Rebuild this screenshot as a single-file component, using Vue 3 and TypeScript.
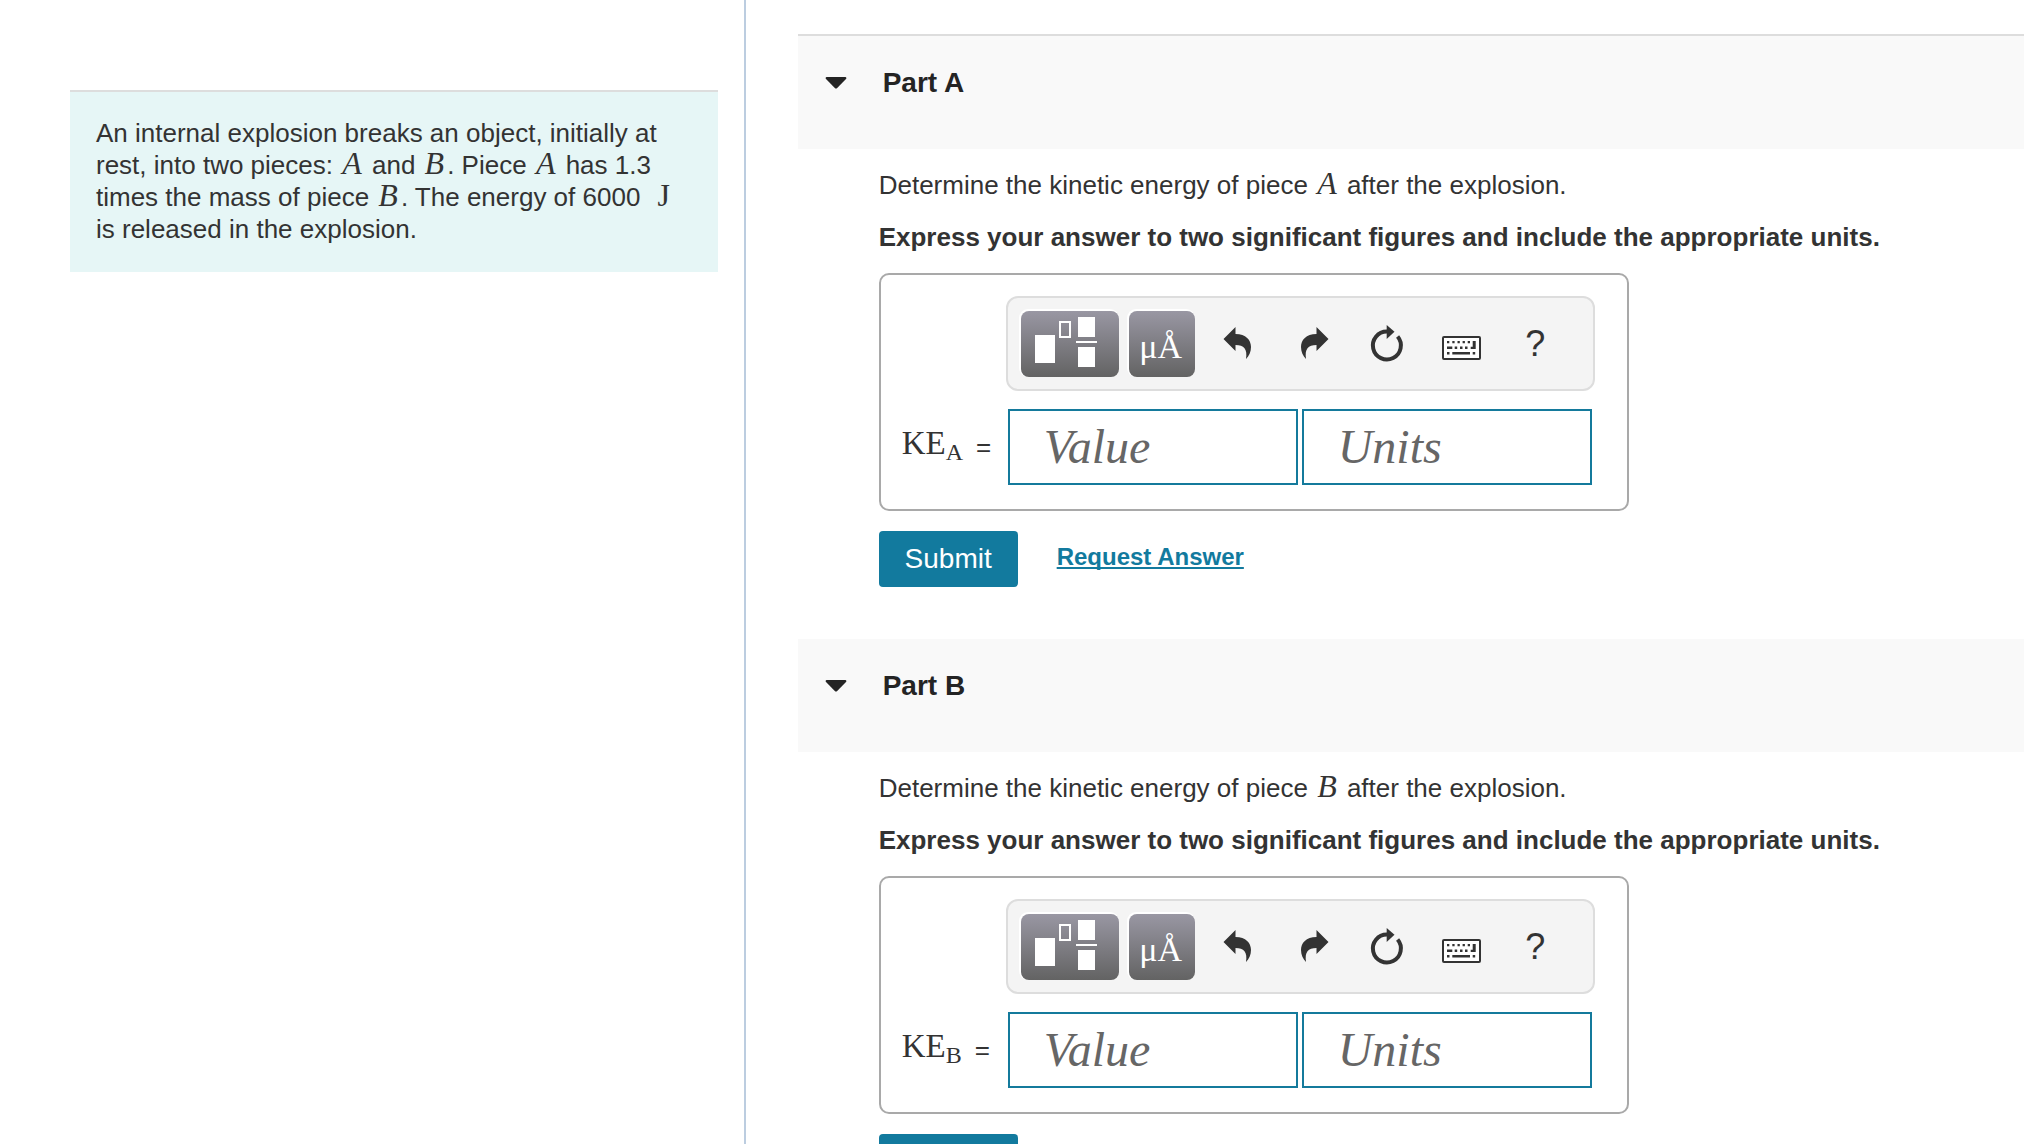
<script setup lang="ts">
import { reactive } from 'vue'

interface Part {
  id: string
  open: boolean
  value: string
  units: string
}

const parts = reactive<Part[]>([
  { id: 'A', open: true, value: '', units: '' },
  { id: 'B', open: true, value: '', units: '' },
])

function clear(part: Part) {
  part.value = ''
  part.units = ''
}
</script>

<template>
  <main class="page">
    <section class="problem">
      <p class="statement">
        An internal explosion breaks an object, initially at rest, into two pieces:
        <i class="math">A</i> and <i class="math">B</i>. Piece <i class="math">A</i> has 1.3 times the mass of piece
        <i class="math">B</i>. The energy of 6000 <span class="math unit">J</span> is released in the explosion.
      </p>
    </section>

    <div class="parts">
      <section v-for="part in parts" :key="part.id" class="part">
        <h2 class="part-head">
          <button type="button" class="toggle" :aria-expanded="part.open" @click="part.open = !part.open">
            <svg class="caret" viewBox="0 0 22 12" aria-hidden="true">
              <path d="M1.500 0H20.500Q22 .6 21 2L12.200 11Q11 12.200 9.800 11L1 2Q0 .6 1.500 0Z" />
            </svg>
            <span>Part {{ part.id }}</span>
          </button>
        </h2>

        <form v-show="part.open" class="part-body" @submit.prevent>
          <p class="text">Determine the kinetic energy of piece <i class="math">{{ part.id }}</i> after the explosion.</p>
          <p class="text strong">Express your answer to two significant figures and include the appropriate units.</p>

          <div class="answer">
            <div class="toolbar" role="toolbar" aria-label="Equation tools">
              <button type="button" class="palette templates" aria-label="Templates">
                <svg viewBox="0 0 98 66" aria-hidden="true">
                  <rect x="14" y="24" width="20" height="28" />
                  <rect class="hollow" x="39" y="11" width="10" height="15" />
                  <rect x="57" y="6" width="17" height="20" />
                  <rect x="55" y="30" width="21" height="2" />
                  <rect x="57" y="36" width="17" height="20" />
                </svg>
              </button>
              <button type="button" class="palette symbols" aria-label="Symbols and units">μÅ</button>
              <button type="button" class="tool first" aria-label="Undo">
                <svg viewBox="0 0 75 66" aria-hidden="true">
                  <path d="M23.500 28L35.500 16V23C46 23 51 29 51 36C51 41 49 45 46 48C47.500 38 44 34 35.500 34V40Z" />
                </svg>
              </button>
              <button type="button" class="tool" aria-label="Redo">
                <svg viewBox="0 0 75 66" aria-hidden="true">
                  <path d="M53.500 28L41.500 16V23C31 23 26 29 26 36C26 41 28 45 31 48C29.500 38 33 34 41.500 34V40Z" />
                </svg>
              </button>
              <button type="button" class="tool" aria-label="Reset" @click="clear(part)">
                <svg viewBox="0 0 75 66" aria-hidden="true">
                  <path class="ring" d="M47.600 25.500A14 14 0 1 1 37 20.500" />
                  <path d="M36.700 14L44.500 20.800L36.700 28Z" />
                </svg>
              </button>
              <button type="button" class="tool" aria-label="Keyboard shortcuts">
                <svg viewBox="-1 0 75 66" aria-hidden="true">
                  <rect class="case" x="17" y="26" width="37" height="22" rx="1" />
                  <path
                    d="M21 30h2.300v2.300h-2.300zM26.300 30h2.300v2.300h-2.300zM31.500 30h2.300v2.300h-2.300zM36.600 30h2.300v2.300h-2.300zM41.700 30h2.300v2.300h-2.300zM46.700 30h3v8h-5v-2.300h2zM21 35.500h5.300v2.500h-5.300zM28.700 35.500h2.500v2.500h-2.500zM34 35.500h2.500v2.500h-2.500zM39 35.500h2.500v2.500h-2.500zM21 41h2.500v2.500h-2.500zM26.300 41h17.700v2.500h-17.700zM46.700 41h2.500v2.500h-2.500z"
                  />
                </svg>
              </button>
              <button type="button" class="tool help" aria-label="Help">?</button>
            </div>

            <label class="quantity" :for="`value-${part.id}`">
              <span class="symbol">KE<sub>{{ part.id }}</sub></span><span class="equals">=</span>
            </label>
            <div class="fields">
              <input :id="`value-${part.id}`" v-model="part.value" type="text" placeholder="Value" />
              <input v-model="part.units" type="text" placeholder="Units" :aria-label="`Units for part ${part.id}`" />
            </div>
          </div>

          <div class="actions">
            <button type="submit" class="submit">Submit</button>
            <a class="request" href="#">Request Answer</a>
          </div>
        </form>
      </section>
    </div>
  </main>
</template>

<style>
body {
  margin: 0;
  background: #fff;
}
</style>

<style scoped>
.page {
  display: grid;
  grid-template-columns: minmax(0, 7fr) minmax(0, 12fr);
  min-height: 100vh;
  color: #333;
  font-family: "Liberation Sans", Arial, sans-serif;
  font-size: 26px;
  line-height: 32px;
}

button,
input {
  box-sizing: border-box;
  margin: 0;
  font-family: inherit;
}

button {
  padding: 0;
  border: 0;
  background: none;
  color: inherit;
  cursor: pointer;
}

.problem {
  padding: 90px 26px 40px 70px;
  border-right: 2px solid #bccde0;
}

.statement {
  margin: 0;
  padding: 25px 26px 27px;
  border-top: 2px solid #ddd;
  background: #e6f6f6;
}

.math {
  font-family: "Liberation Serif", "Times New Roman", serif;
  font-size: 32px;
  line-height: 28px;
  margin: 0 3px 0 2px;
}

.unit {
  margin-left: 10px;
}

.parts {
  padding: 34px 0 52px 52px;
}

.part-head {
  margin: 0;
  padding: 31px 27px 50px;
  background: #f9f9f9;
}

.part:first-child .part-head {
  border-top: 2px solid #ddd;
}

.toggle {
  display: flex;
  align-items: center;
  gap: 36px;
  color: #242424;
  font-size: 28px;
  font-weight: 700;
  line-height: 32px;
}

.caret {
  width: 22px;
  height: 12px;
  fill: #242424;
}

.part-body {
  padding: 20px 24px 52px 81px;
}

.text {
  margin: 0 0 20px;
}

.strong {
  font-weight: 700;
}

.answer {
  display: grid;
  grid-template-columns: 104px minmax(0, 1fr);
  row-gap: 18px;
  box-sizing: border-box;
  max-width: 750px;
  padding: 21px 32px 24px 21px;
  border: 2px solid #a9a9a9;
  border-radius: 10px;
}

.toolbar {
  grid-column: 2;
  display: flex;
  padding: 13px 13px 12px;
  border: 2px solid #ddd;
  border-radius: 12px;
  background: #f4f4f4;
}

.palette {
  height: 66px;
  border-radius: 8px;
  background: linear-gradient(#9997a3, #636363);
  box-shadow: -1px -1px 0 1px #fff;
  color: #fff;
}

.palette svg,
.tool svg {
  display: block;
  width: 100%;
  height: 66px;
}

.templates {
  width: 98px;
  margin-right: 10px;
  fill: #fff;
}

.hollow {
  fill: none;
  stroke: #fff;
  stroke-width: 2;
}

.symbols {
  width: 66px;
  padding: 6px 2px 0 0;
  font-family: "Liberation Serif", "Times New Roman", serif;
  font-size: 34px;
  line-height: 40px;
}

.tool {
  width: 75px;
  height: 66px;
  fill: #333;
}

.first {
  margin-left: 5px;
}

.ring {
  fill: none;
  stroke: #333;
  stroke-width: 4;
}

.case {
  fill: #fff;
  stroke: #333;
  stroke-width: 2;
}

.help {
  padding-right: 4px;
  font-size: 36px;
}

.quantity {
  display: flex;
  align-items: center;
  gap: 13px;
}

.symbol {
  padding-bottom: 6px;
  font-family: "Liberation Serif", "Times New Roman", serif;
  font-size: 33px;
}

.symbol sub {
  font-size: 24px;
  line-height: 20px;
  vertical-align: -6px;
}

.fields {
  display: flex;
  gap: 4px;
  padding: 0 3px 0 2px;
}

.fields input {
  flex: 1;
  min-width: 0;
  height: 76px;
  padding: 0 34px 2px;
  border: 2px solid #147a9c;
  border-radius: 0;
  background: #fff;
  color: #333;
  font-family: "Liberation Serif", "Times New Roman", serif;
  font-size: 48px;
}

.fields input::placeholder {
  color: #666;
  font-style: italic;
  opacity: 1;
}

.actions {
  display: flex;
  align-items: center;
  gap: 39px;
  margin-top: 20px;
}

.submit {
  width: 139px;
  height: 56px;
  border-radius: 4px;
  background: #127a9e;
  color: #fff;
  font-size: 28px;
}

.request {
  padding-bottom: 4px;
  color: #127a9e;
  font-size: 24px;
  font-weight: 700;
  line-height: 28px;
  text-decoration-thickness: 2px;
  text-underline-offset: 2px;
  text-decoration-skip-ink: none;
}
</style>
